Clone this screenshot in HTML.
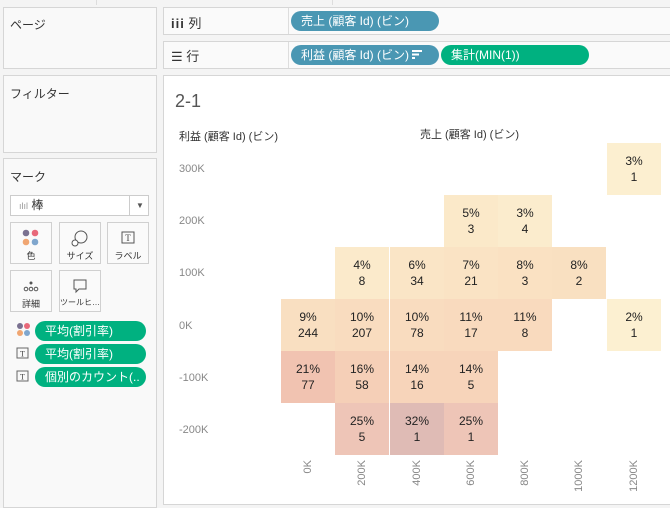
<!DOCTYPE html><html><head><meta charset="utf-8"><style>
body{margin:0;width:670px;height:502px;background:#f4f4f4;font-family:"Liberation Sans","Noto Sans CJK JP",sans-serif;position:relative;overflow:hidden;color:#333}
.p{position:absolute;background:#f9f9f9;border:1px solid #d6d6d6;box-sizing:border-box}
.t{position:absolute;font-size:12px}
.pill{position:absolute;height:20px;border-radius:10px;color:#fff;font-size:12px;line-height:20px;padding-left:10px;box-sizing:border-box;white-space:nowrap}
.b{background:#4a97b3}.g{background:#00b180}
.card{position:absolute;width:42px;height:42px;border:1px solid #d0d0d0;background:#fafafa;box-sizing:border-box;font-size:9px;text-align:center;white-space:nowrap;overflow:hidden}
.c{position:absolute;width:54px;height:52px;font-size:12px;text-align:center;line-height:16px;box-sizing:border-box;padding-top:10px;color:#222}
.yl{position:absolute;left:179px;font-size:11px;color:#888}
.xl{position:absolute;top:460px;width:40px;height:12px;line-height:12px;text-align:right;font-size:11px;color:#888;transform-origin:left top;transform:rotate(-90deg) translateX(-40px);white-space:nowrap}
</style></head><body>
<div style="position:absolute;left:96px;top:0;width:1px;height:5px;background:#ddd"></div>
<div style="position:absolute;left:332px;top:0;width:1px;height:5px;background:#ddd"></div>
<div class="p" style="left:3px;top:7px;width:154px;height:62px"></div><div class="t" style="left:10px;top:16px">ページ</div>
<div class="p" style="left:3px;top:75px;width:154px;height:78px"></div><div class="t" style="left:10px;top:85px">フィルター</div>
<div class="p" style="left:3px;top:158px;width:154px;height:350px"></div><div class="t" style="left:10px;top:168px">マーク</div>
<div style="position:absolute;left:10px;top:195px;width:139px;height:21px;border:1px solid #ccc;background:#fff;box-sizing:border-box;font-size:12px;line-height:19px"><span style="color:#999;font-size:9px;margin-left:8px">ılıl</span> 棒<span style="position:absolute;left:118px;top:0;height:19px;border-left:1px solid #ccc;width:20px;text-align:center;font-size:8px;color:#555">▼</span></div>
<div class="card" style="left:10px;top:222px"><svg width="20" height="18" style="margin-top:6px"><circle cx="5" cy="4" r="3.3" fill="#7a7190"/><circle cx="14" cy="4" r="3.3" fill="#e8697a"/><circle cx="5" cy="13" r="3.3" fill="#f0a672"/><circle cx="14" cy="13" r="3.3" fill="#7fa6cd"/></svg><div>色</div></div>
<div class="card" style="left:59px;top:222px"><svg width="20" height="18" style="margin-top:6px"><circle cx="11" cy="8" r="6" fill="none" stroke="#555"/><circle cx="5" cy="14" r="3" fill="#fff" stroke="#555"/></svg><div>サイズ</div></div>
<div class="card" style="left:107px;top:222px"><svg width="20" height="18" style="margin-top:6px"><rect x="4" y="3" width="12" height="11" fill="none" stroke="#555"/><text x="10" y="12" font-size="9" text-anchor="middle" fill="#444" font-family="Liberation Serif">T</text></svg><div>ラベル</div></div>
<div class="card" style="left:10px;top:270px"><svg width="20" height="18" style="margin-top:6px"><circle cx="10" cy="6" r="1.5" fill="#555"/><circle cx="5" cy="12" r="1.8" fill="none" stroke="#555"/><circle cx="10" cy="12" r="1.8" fill="none" stroke="#555"/><circle cx="15" cy="12" r="1.8" fill="none" stroke="#555"/></svg><div>詳細</div></div>
<div class="card" style="left:59px;top:270px"><svg width="20" height="18" style="margin-top:6px"><path d="M4 3h12v9h-7l-3 3v-3h-2z" fill="none" stroke="#555"/></svg><div style="font-size:8px">ツールヒ…</div></div>
<svg style="position:absolute;left:16px;top:322px" width="16" height="16"><circle cx="4" cy="4" r="3" fill="#7a7190"/><circle cx="11" cy="4" r="3" fill="#e8697a"/><circle cx="4" cy="11" r="3" fill="#f0a672"/><circle cx="11" cy="11" r="3" fill="#7fa6cd"/></svg>
<svg style="position:absolute;left:16px;top:347px" width="14" height="14"><rect x="1" y="1" width="11" height="10" fill="none" stroke="#666"/><text x="6.5" y="9.5" font-size="8" text-anchor="middle" fill="#444" font-family="Liberation Serif">T</text></svg>
<svg style="position:absolute;left:16px;top:370px" width="14" height="14"><rect x="1" y="1" width="11" height="10" fill="none" stroke="#666"/><text x="6.5" y="9.5" font-size="8" text-anchor="middle" fill="#444" font-family="Liberation Serif">T</text></svg>
<div class="pill g" style="left:35px;top:321px;width:111px">平均(割引率)</div>
<div class="pill g" style="left:35px;top:344px;width:111px">平均(割引率)</div>
<div class="pill g" style="left:35px;top:367px;width:111px">個別のカウント(..</div>
<div class="p" style="left:163px;top:7px;width:510px;height:28px;background:#fafafa"></div>
<div style="position:absolute;left:288px;top:8px;width:1px;height:26px;background:#ddd"></div>
<div class="t" style="left:171px;top:13px;font-size:13px"><b style="letter-spacing:1px">iii</b> 列</div>
<div class="pill b" style="left:291px;top:11px;width:148px">売上 (顧客 Id) (ビン)</div>
<div class="p" style="left:163px;top:41px;width:510px;height:28px;background:#fafafa"></div>
<div style="position:absolute;left:288px;top:42px;width:1px;height:26px;background:#ddd"></div>
<div class="t" style="left:171px;top:46px;font-size:13px">☰ 行</div>
<div class="pill b" style="left:291px;top:45px;width:148px">利益 (顧客 Id) (ビン) <svg width="10" height="9"><rect x="0" y="0" width="10" height="2" fill="#fff"/><rect x="0" y="3.5" width="7" height="2" fill="#fff"/><rect x="0" y="7" width="3" height="2" fill="#fff"/></svg></div>
<div class="pill g" style="left:441px;top:45px;width:148px">集計(MIN(1))</div>
<div class="p" style="left:163px;top:75px;width:510px;height:430px;background:#fff"></div>
<div class="t" style="left:175px;top:91px;font-size:18px;color:#555">2-1</div>
<div class="t" style="left:179px;top:128px;font-size:11px">利益 (顧客 Id) (ビン)</div>
<div class="t" style="left:420px;top:126px;font-size:11px">売上 (顧客 Id) (ビン)</div>
<div class="yl" style="top:163px">300K</div><div class="yl" style="top:215px">200K</div><div class="yl" style="top:267px">100K</div><div class="yl" style="top:320px">0K</div><div class="yl" style="top:372px">-100K</div><div class="yl" style="top:424px">-200K</div>
<div class="c" style="left:607px;top:143px;background:#fcefd0">3%<br>1</div>
<div class="c" style="left:444px;top:195px;background:#fbe9c9">5%<br>3</div>
<div class="c" style="left:498px;top:195px;background:#fbeccd">3%<br>4</div>
<div class="c" style="left:335px;top:247px;background:#fbeacb">4%<br>8</div>
<div class="c" style="left:390px;top:247px;background:#fae5c6">6%<br>34</div>
<div class="c" style="left:444px;top:247px;background:#fae3c4">7%<br>21</div>
<div class="c" style="left:498px;top:247px;background:#fae1c2">8%<br>3</div>
<div class="c" style="left:552px;top:247px;background:#f9e0c1">8%<br>2</div>
<div class="c" style="left:281px;top:299px;background:#f9dfc1">9%<br>244</div>
<div class="c" style="left:335px;top:299px;background:#f9dcbf">10%<br>207</div>
<div class="c" style="left:390px;top:299px;background:#f9dcbf">10%<br>78</div>
<div class="c" style="left:444px;top:299px;background:#f9dabe">11%<br>17</div>
<div class="c" style="left:498px;top:299px;background:#f9dabe">11%<br>8</div>
<div class="c" style="left:607px;top:299px;background:#fcf0d1">2%<br>1</div>
<div class="c" style="left:281px;top:351px;background:#f1c3b1">21%<br>77</div>
<div class="c" style="left:335px;top:351px;background:#f5cfb7">16%<br>58</div>
<div class="c" style="left:390px;top:351px;background:#f7d4ba">14%<br>16</div>
<div class="c" style="left:444px;top:351px;background:#f7d4ba">14%<br>5</div>
<div class="c" style="left:335px;top:403px;background:#eec5b7">25%<br>5</div>
<div class="c" style="left:390px;top:403px;background:#dfbbb5">32%<br>1</div>
<div class="c" style="left:444px;top:403px;background:#eec5b7">25%<br>1</div>
<div style="position:absolute;left:389px;top:247px;width:1px;height:208px;background:#fff"></div>
<div class="xl" style="left:302px">0K</div><div class="xl" style="left:356px">200K</div><div class="xl" style="left:411px">400K</div><div class="xl" style="left:465px">600K</div><div class="xl" style="left:519px">800K</div><div class="xl" style="left:573px">1000K</div><div class="xl" style="left:628px">1200K</div>
</body></html>
